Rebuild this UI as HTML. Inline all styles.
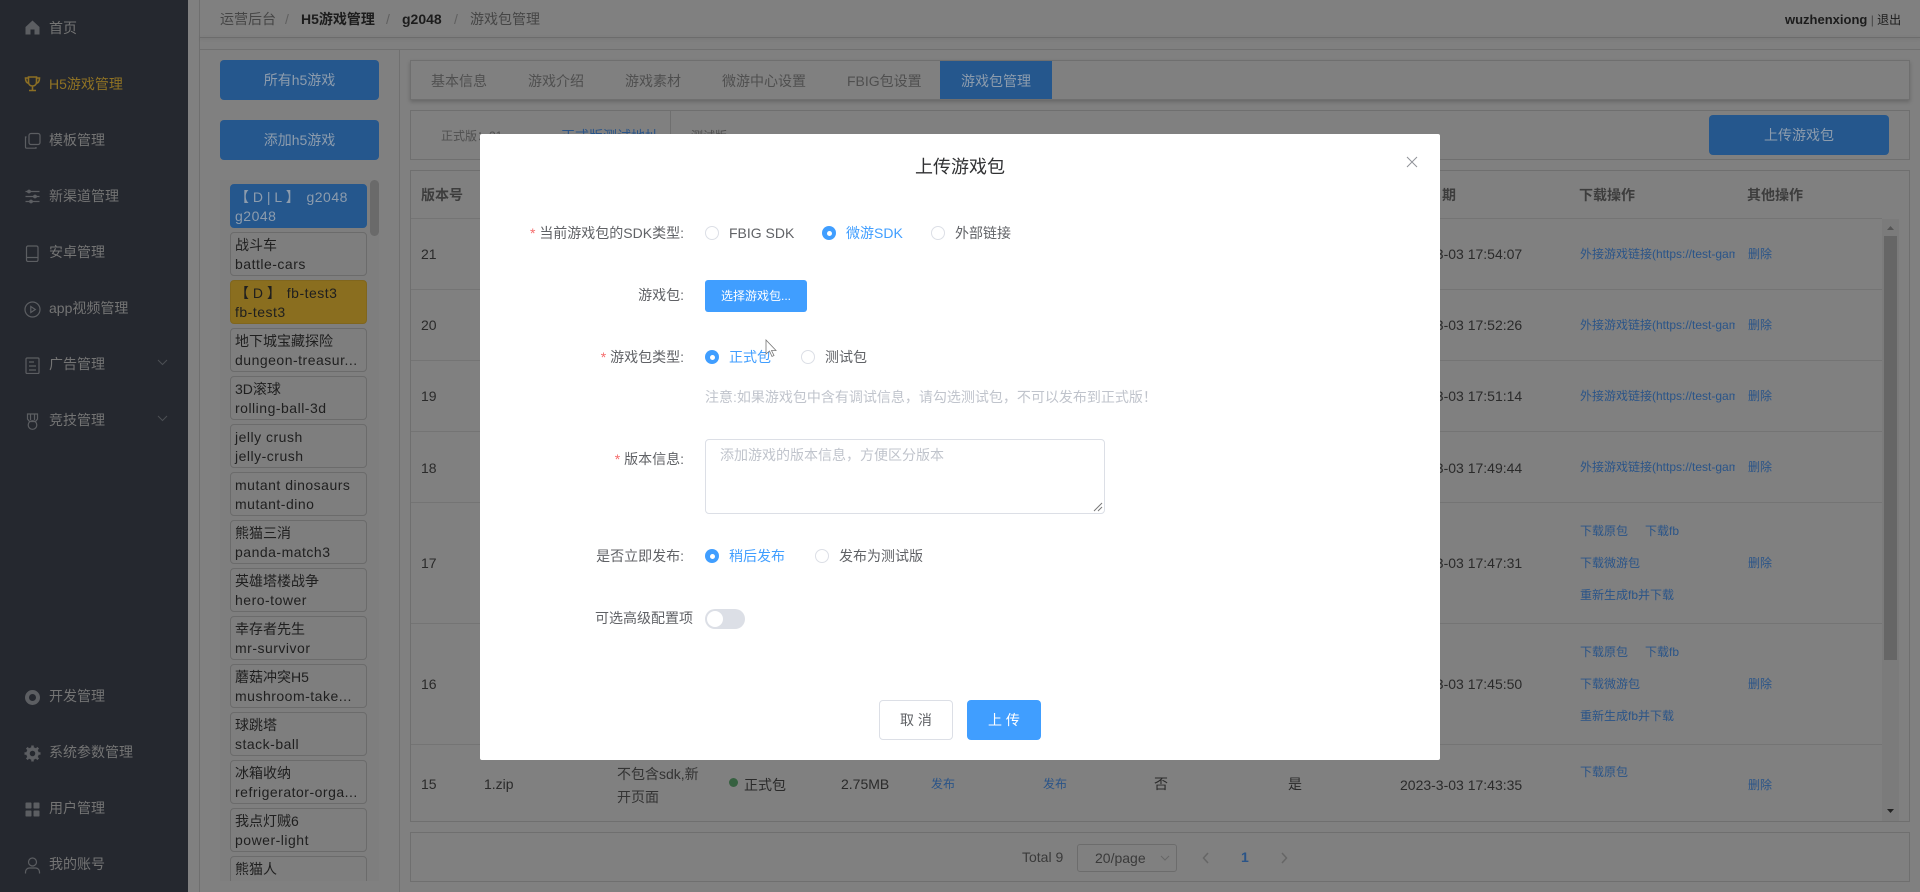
<!DOCTYPE html>
<html lang="zh-CN"><head><meta charset="utf-8"><title>上传游戏包</title>
<style>
html,body{margin:0;padding:0;width:1920px;height:892px;overflow:hidden;background:#808080}
body{font-family:"Liberation Sans","Noto Sans CJK SC",sans-serif;font-size:14px;color:#2a2a2a;position:relative}
.a,.t{position:absolute}
.t{white-space:nowrap;line-height:20px}
.b{font-weight:bold}
.n{color:#747474;font-size:14px}
.ic{position:absolute;left:24px;width:17px;height:17px;fill:none;stroke:#5c5e62;stroke-width:1.2}
.l{font-size:12px;color:#2a5488}
.h{font-weight:bold;color:#3d3d3d}
.ln{position:absolute;left:411px;width:1471px;height:1px;background:#747474}
.pn{position:absolute;box-sizing:border-box;border:1px solid #6f6f6f}
.btn{position:absolute;border-radius:4px;text-align:center;line-height:40px}
.g{position:absolute;left:230px;width:137px;height:44px;box-sizing:border-box;border:1px solid #6b6b6b;border-radius:4px;padding:3px 0 0 4px;line-height:19px;color:#1f1f1f;white-space:nowrap;overflow:hidden;letter-spacing:0}
.g i{font-style:normal;letter-spacing:.5px}
.m{color:#606266}
.r{position:absolute;width:14px;height:14px;box-sizing:border-box;border:1px solid #dcdfe6;border-radius:50%;background:#fff}
.r.on{border:0;background:#409eff}
.r.on::after{content:"";position:absolute;left:4.5px;top:4.5px;width:5px;height:5px;background:#fff;border-radius:50%}
.s{color:#f56c6c}
.bl{color:#409eff}
.lab{text-align:right;right:1236px}
</style></head><body>

<!-- sidebar -->
<div class="a" style="left:0;top:0;width:188px;height:892px;background:#25282f"></div>
<svg class="ic" style="top:19px" viewBox="0 0 17 17"><path d="M8.500 1.500 1.500 8v7.500h5v-5h4v5h5V8z" fill="#5c5e62" stroke="none"/></svg>
<div class="t n" style="left:49px;top:18px">首页</div>
<svg class="ic" style="top:75px;stroke:#8c6f24;stroke-width:1.6" viewBox="0 0 17 17"><path d="M4.500 2h8v5c0 2.500-1.700 4-4 4s-4-1.500-4-4zM4.500 3H1.500c0 3 1 5 3.500 5.500M12.500 3h3c0 3-1 5-3.500 5.500M8.500 11v4M5 15.500h7"/></svg>
<div class="t" style="left:49px;top:74px;color:#8f7224">H5游戏管理</div>
<svg class="ic" style="top:132px" viewBox="0 0 17 17"><rect x="5" y="1.500" width="11" height="11" rx="2"/><path d="M2.500 5H1.500v10c0 .8.5 1.200 1.200 1.200H12V15"/></svg>
<div class="t n" style="left:49px;top:130px">模板管理</div>
<svg class="ic" style="top:188px" viewBox="0 0 17 17"><path d="M1.500 3.500h14M1.500 8.500h14M1.500 13.500h14"/><circle cx="5" cy="3.500" r="1.300" fill="#5c5e62"/><circle cx="11" cy="8.500" r="1.300" fill="#5c5e62"/><circle cx="7" cy="13.500" r="1.300" fill="#5c5e62"/></svg>
<div class="t n" style="left:49px;top:186px">新渠道管理</div>
<svg class="ic" style="top:245px" viewBox="0 0 17 17"><rect x="2.500" y="1" width="11.500" height="15.500" rx="1.500"/><path d="M2.500 12.500h11.500"/></svg>
<div class="t n" style="left:49px;top:242px">安卓管理</div>
<svg class="ic" style="top:301px;left:24px" viewBox="0 0 17 17"><circle cx="8.500" cy="8.500" r="7.500"/><path d="M6.800 5.500v6l4.500-3z"/></svg>
<div class="t n" style="left:49px;top:298px">app视频管理</div>
<svg class="ic" style="top:357px" viewBox="0 0 17 17"><rect x="2" y="1" width="13" height="15.500" rx="1"/><path d="M5 5h5M5 9h7M5 13h7"/></svg>
<div class="t n" style="left:49px;top:354px">广告管理</div>
<svg class="a" style="left:157px;top:359px" width="11" height="7" viewBox="0 0 11 7" fill="none" stroke="#4c4f54"><path d="M1 1l4.500 4.500L10 1"/></svg>
<svg class="ic" style="top:413px" viewBox="0 0 17 17"><path d="M3.500 1h10v5l-2 2.500h-6l-2-2.500zM6.500 1v6M10.500 1v6"/><circle cx="8.500" cy="12" r="4.300"/></svg>
<div class="t n" style="left:49px;top:410px">竞技管理</div>
<svg class="a" style="left:157px;top:415px" width="11" height="7" viewBox="0 0 11 7" fill="none" stroke="#4c4f54"><path d="M1 1l4.500 4.500L10 1"/></svg>
<svg class="ic" style="top:689px;stroke-width:4" viewBox="0 0 17 17"><circle cx="8.500" cy="8.500" r="5.500"/></svg>
<div class="t n" style="left:49px;top:686px">开发管理</div>
<svg class="ic" style="top:745px;stroke-width:3.500;left:24px" viewBox="0 0 17 17"><circle cx="8.500" cy="8.500" r="4.500"/><path d="M8.500 .5v2.500M8.500 14v2.500M.5 8.500H3M14 8.500h2.500M2.800 2.800l1.800 1.800M12.400 12.400l1.800 1.800M2.800 14.200l1.800-1.800M12.400 4.600l1.800-1.800" stroke-width="2.500"/></svg>
<div class="t n" style="left:49px;top:742px">系统参数管理</div>
<svg class="ic" style="top:801px" viewBox="0 0 17 17"><g fill="#5c5e62" stroke="none"><rect x="1.500" y="1.500" width="6" height="6" rx=".8"/><rect x="9.500" y="1.500" width="6" height="6" rx=".8"/><rect x="1.500" y="9.500" width="6" height="6" rx=".8"/><rect x="9.500" y="9.500" width="6" height="6" rx=".8"/></g></svg>
<div class="t n" style="left:49px;top:798px">用户管理</div>
<svg class="ic" style="top:857px" viewBox="0 0 17 17"><circle cx="8.500" cy="5" r="4"/><path d="M1.500 16.500v-1.500c0-2.500 2-4 4-4h6c2 0 4 1.500 4 4v1.500"/></svg>
<div class="t n" style="left:49px;top:854px">我的账号</div>

<!-- frame lines -->
<div class="a" style="left:199px;top:0;width:1px;height:892px;background:#6f6f6f"></div>
<div class="a" style="left:200px;top:37px;width:1720px;height:1px;background:#6c6c6c;box-shadow:0 1px 3px rgba(0,0,0,.18)"></div>
<div class="a" style="left:200px;top:49px;width:1720px;height:1px;background:#707070"></div>
<div class="a" style="left:399px;top:50px;width:1px;height:842px;background:#707070"></div>

<!-- breadcrumb -->
<div class="t" style="left:220px;top:9px;color:#454545">运营后台</div>
<div class="t" style="left:285px;top:9px;color:#5f5f5f">/</div>
<div class="t b" style="left:301px;top:9px;color:#1c1c1c">H5游戏管理</div>
<div class="t" style="left:386px;top:9px;color:#5f5f5f">/</div>
<div class="t b" style="left:402px;top:9px;color:#1c1c1c">g2048</div>
<div class="t" style="left:454px;top:9px;color:#5f5f5f">/</div>
<div class="t" style="left:470px;top:9px;color:#454545">游戏包管理</div>
<div class="t" style="left:1785px;top:10px;font-size:12px;color:#1c1c1c"><span class="b" style="font-size:13px">wuzhenxiong</span> <span style="color:#444">|</span> 退出</div>

<!-- left -->
<div class="btn" style="left:220px;top:60px;width:159px;height:40px;background:#25578d;color:#8d9cad">所有h5游戏</div>
<div class="btn" style="left:220px;top:120px;width:159px;height:40px;background:#25578d;color:#8d9cad">添加h5游戏</div>
<div class="a" style="left:220px;top:180px;width:159px;height:701px;background:#7e7e7e;overflow:hidden"></div>
<div class="a" style="left:0;top:0;width:1920px;height:881px;overflow:hidden">
<div class="g" style="top:184px;background:#25578d;border-color:#25578d;color:#8d9cad">【 D | L 】 <i style="margin-left:3px">g2048</i><br><i>g2048</i></div>
<div class="g" style="top:232px">战斗车<br><i>battle-cars</i></div>
<div class="g" style="top:280px;background:#8a6e1f;color:#1f1f1f;border-color:#80661e">【 D 】 <i style="margin-left:2px">fb-test3</i><br><i>fb-test3</i></div>
<div class="g" style="top:328px">地下城宝藏探险<br><i>dungeon-treasur...</i></div>
<div class="g" style="top:376px">3D滚球<br><i>rolling-ball-3d</i></div>
<div class="g" style="top:424px"><i>jelly crush</i><br><i>jelly-crush</i></div>
<div class="g" style="top:472px"><i>mutant dinosaurs</i><br><i>mutant-dino</i></div>
<div class="g" style="top:520px">熊猫三消<br><i>panda-match3</i></div>
<div class="g" style="top:568px">英雄塔楼战争<br><i>hero-tower</i></div>
<div class="g" style="top:616px">幸存者先生<br><i>mr-survivor</i></div>
<div class="g" style="top:664px">蘑菇冲突H5<br><i>mushroom-take...</i></div>
<div class="g" style="top:712px">球跳塔<br><i>stack-ball</i></div>
<div class="g" style="top:760px">冰箱收纳<br><i>refrigerator-orga...</i></div>
<div class="g" style="top:808px">我点灯贼6<br><i>power-light</i></div>
<div class="g" style="top:856px">熊猫人<br><i>panda-man</i></div>
</div>
<div class="a" style="left:370px;top:180px;width:9px;height:56px;background:#6a6a6a;border-radius:5px"></div>

<!-- tabs -->
<div class="pn" style="left:410px;top:60px;width:1500px;height:40px;box-shadow:0 2px 4px rgba(0,0,0,.2)"></div>
<div class="t" style="left:431px;top:71px;color:#4f4f4f">基本信息</div>
<div class="t" style="left:528px;top:71px;color:#4f4f4f">游戏介绍</div>
<div class="t" style="left:625px;top:71px;color:#4f4f4f">游戏素材</div>
<div class="t" style="left:722px;top:71px;color:#4f4f4f">微游中心设置</div>
<div class="t" style="left:847px;top:71px;color:#4f4f4f">FBIG包设置</div>
<div class="a" style="left:940px;top:61px;width:112px;height:38px;background:#25578d"></div>
<div class="t" style="left:961px;top:71px;color:#8d9cad">游戏包管理</div>

<!-- status -->
<div class="pn" style="left:410px;top:110px;width:1500px;height:50px"></div>
<div class="a" style="left:670px;top:110px;width:1px;height:50px;background:#6f6f6f"></div>
<div class="t" style="left:441px;top:126px;font-size:12px;color:#4f4f4f">正式版：21</div>
<div class="t" style="left:561px;top:126px;color:#2a5488">正式版测试地址</div>
<div class="t" style="left:691px;top:126px;font-size:12px;color:#4f4f4f">测试版</div>
<div class="btn" style="left:1709px;top:115px;width:180px;height:40px;background:#25578d;color:#8d9cad">上传游戏包</div>

<!-- table -->
<div class="pn" style="left:410px;top:170px;width:1500px;height:652px"></div>
<div class="t h" style="left:421px;top:185px">版本号</div>
<div class="t h" style="left:1400px;top:185px">发布日期</div>
<div class="t h" style="left:1579px;top:185px">下载操作</div>
<div class="t h" style="left:1747px;top:185px">其他操作</div>
<div class="ln" style="top:218px"></div><div class="ln" style="top:289px"></div><div class="ln" style="top:360px"></div><div class="ln" style="top:431px"></div><div class="ln" style="top:502px"></div><div class="ln" style="top:623px"></div><div class="ln" style="top:744px"></div>

<div class="t" style="left:421px;top:244px">21</div><div class="t" style="left:1400px;top:244px">2023-3-03 17:54:07</div><div class="t l" style="left:1580px;top:244px;width:155px;overflow:hidden">外接游戏链接(https://test-game</div><div class="t l" style="left:1748px;top:244px">删除</div>
<div class="t" style="left:421px;top:315px">20</div><div class="t" style="left:1400px;top:315px">2023-3-03 17:52:26</div><div class="t l" style="left:1580px;top:315px;width:155px;overflow:hidden">外接游戏链接(https://test-game</div><div class="t l" style="left:1748px;top:315px">删除</div>
<div class="t" style="left:421px;top:386px">19</div><div class="t" style="left:1400px;top:386px">2023-3-03 17:51:14</div><div class="t l" style="left:1580px;top:386px;width:155px;overflow:hidden">外接游戏链接(https://test-game</div><div class="t l" style="left:1748px;top:386px">删除</div>
<div class="t" style="left:421px;top:458px">18</div><div class="t" style="left:1400px;top:458px">2023-3-03 17:49:44</div><div class="t l" style="left:1580px;top:457px;width:155px;overflow:hidden">外接游戏链接(https://test-game</div><div class="t l" style="left:1748px;top:457px">删除</div>

<div class="t" style="left:421px;top:553px">17</div><div class="t" style="left:1400px;top:553px">2023-3-03 17:47:31</div>
<div class="t l" style="left:1580px;top:521px">下载原包</div><div class="t l" style="left:1645px;top:521px">下载fb</div><div class="t l" style="left:1580px;top:553px">下载微游包</div><div class="t l" style="left:1580px;top:585px">重新生成fb并下载</div><div class="t l" style="left:1748px;top:553px">删除</div>

<div class="t" style="left:421px;top:674px">16</div><div class="t" style="left:1400px;top:674px">2023-3-03 17:45:50</div>
<div class="t l" style="left:1580px;top:642px">下载原包</div><div class="t l" style="left:1645px;top:642px">下载fb</div><div class="t l" style="left:1580px;top:674px">下载微游包</div><div class="t l" style="left:1580px;top:706px">重新生成fb并下载</div><div class="t l" style="left:1748px;top:674px">删除</div>

<div class="t" style="left:421px;top:774px">15</div>
<div class="t" style="left:484px;top:774px">1.zip</div>
<div class="t" style="left:617px;top:763px;color:#333;line-height:23px">不包含sdk,新<br>开页面</div>
<div class="a" style="left:729px;top:778px;width:9px;height:9px;border-radius:50%;background:#366040"></div>
<div class="t" style="left:744px;top:775px">正式包</div>
<div class="t" style="left:841px;top:774px">2.75MB</div>
<div class="t l" style="left:931px;top:774px">发布</div>
<div class="t l" style="left:1043px;top:774px">发布</div>
<div class="t" style="left:1154px;top:774px">否</div>
<div class="t" style="left:1288px;top:774px">是</div>
<div class="t" style="left:1400px;top:775px">2023-3-03 17:43:35</div>
<div class="t l" style="left:1580px;top:762px">下载原包</div>
<div class="t l" style="left:1748px;top:775px">删除</div>

<!-- table scrollbar -->
<div class="a" style="left:1882px;top:219px;width:17px;height:602px;background:#7b7b7b"></div>
<div class="a" style="left:1884px;top:236px;width:13px;height:424px;background:#666"></div>
<svg class="a" style="left:1886px;top:225px" width="9" height="6"><path d="M4.500 1 8 5H1z" fill="#555"/></svg>
<svg class="a" style="left:1886px;top:808px" width="9" height="6"><path d="M4.500 5 8 1H1z" fill="#222"/></svg>

<!-- pagination -->
<div class="pn" style="left:410px;top:832px;width:1500px;height:50px"></div>
<div class="t" style="left:1022px;top:847px;color:#3a3a3a">Total 9</div>
<div class="a" style="left:1077px;top:844px;width:100px;height:28px;box-sizing:border-box;border:1px solid #6c6c6c;border-radius:3px"></div>
<div class="t" style="left:1095px;top:848px;color:#3a3a3a">20/page</div>
<svg class="a" style="left:1160px;top:855px" width="10" height="7" fill="none" stroke="#666"><path d="M1 1l4 4 4-4"/></svg>
<svg class="a" style="left:1202px;top:852px" width="8" height="12" fill="none" stroke="#666" stroke-width="1.500"><path d="M6 1 1.500 6 6 11"/></svg>
<div class="t b" style="left:1241px;top:847px;color:#2a5488">1</div>
<svg class="a" style="left:1280px;top:852px" width="8" height="12" fill="none" stroke="#666" stroke-width="1.500"><path d="M2 1l4.500 5L2 11"/></svg>

<!-- modal -->
<div class="a" style="left:480px;top:134px;width:960px;height:626px;background:#fff;border-radius:2px"></div>
<div class="t" style="left:915px;top:155px;font-size:18px;line-height:24px;color:#303133">上传游戏包</div>
<svg class="a" style="left:1406px;top:156px" width="12" height="12" fill="none" stroke="#909399"><path d="M1 1l10 10M11 1 1 11"/></svg>

<div class="t m lab" style="top:223px"><span class="s">* </span>当前游戏包的SDK类型:</div>
<div class="r" style="left:705px;top:226px"></div><div class="t m" style="left:729px;top:223px">FBIG SDK</div>
<div class="r on" style="left:822px;top:226px"></div><div class="t bl" style="left:846px;top:223px">微游SDK</div>
<div class="r" style="left:931px;top:226px"></div><div class="t m" style="left:955px;top:223px">外部链接</div>

<div class="t m lab" style="top:285px">游戏包:</div>
<div class="a" style="left:705px;top:280px;width:102px;height:32px;background:#409eff;border-radius:3px;color:#fff;font-size:12px;line-height:32px;text-align:center">选择游戏包...</div>

<div class="t m lab" style="top:347px"><span class="s">* </span>游戏包类型:</div>
<div class="r on" style="left:705px;top:350px"></div><div class="t bl" style="left:729px;top:347px">正式包</div>
<div class="r" style="left:801px;top:350px"></div><div class="t m" style="left:825px;top:347px">测试包</div>
<div class="t" style="left:705px;top:387px;color:#c0c4cc">注意:如果游戏包中含有调试信息，请勾选测试包，不可以发布到正式版！</div>

<div class="t m lab" style="top:449px"><span class="s">* </span>版本信息:</div>
<div class="a" style="left:705px;top:439px;width:400px;height:75px;box-sizing:border-box;border:1px solid #dcdfe6;border-radius:4px"></div>
<div class="t" style="left:720px;top:445px;color:#c0c4cc">添加游戏的版本信息，方便区分版本</div>
<svg class="a" style="left:1093px;top:502px" width="10" height="10" fill="none" stroke="#777"><path d="M1 9 9 1M5 9l4-4"/></svg>

<div class="t m lab" style="top:546px">是否立即发布:</div>
<div class="r on" style="left:705px;top:549px"></div><div class="t bl" style="left:729px;top:546px">稍后发布</div>
<div class="r" style="left:815px;top:549px"></div><div class="t m" style="left:839px;top:546px">发布为测试版</div>

<div class="t m" style="left:595px;top:608px">可选高级配置项</div>
<div class="a" style="left:705px;top:609px;width:40px;height:20px;border-radius:10px;background:#dcdfe6"></div>
<div class="a" style="left:707px;top:611px;width:16px;height:16px;border-radius:50%;background:#fff"></div>

<div class="a" style="left:879px;top:700px;width:74px;height:40px;box-sizing:border-box;border:1px solid #dcdfe6;border-radius:4px;background:#fff;color:#606266;line-height:38px;text-align:center">取 消</div>
<div class="a" style="left:967px;top:700px;width:74px;height:40px;border-radius:4px;background:#409eff;color:#fff;line-height:40px;text-align:center">上 传</div>

<!-- cursor -->
<svg class="a" style="left:765px;top:339px" width="14" height="20" viewBox="0 0 14 20"><path d="M1 1v14l3.500-3 2.500 5.500 2-1-2.500-5H11z" fill="#fff" stroke="#777" stroke-width=".8"/></svg>
</body></html>
